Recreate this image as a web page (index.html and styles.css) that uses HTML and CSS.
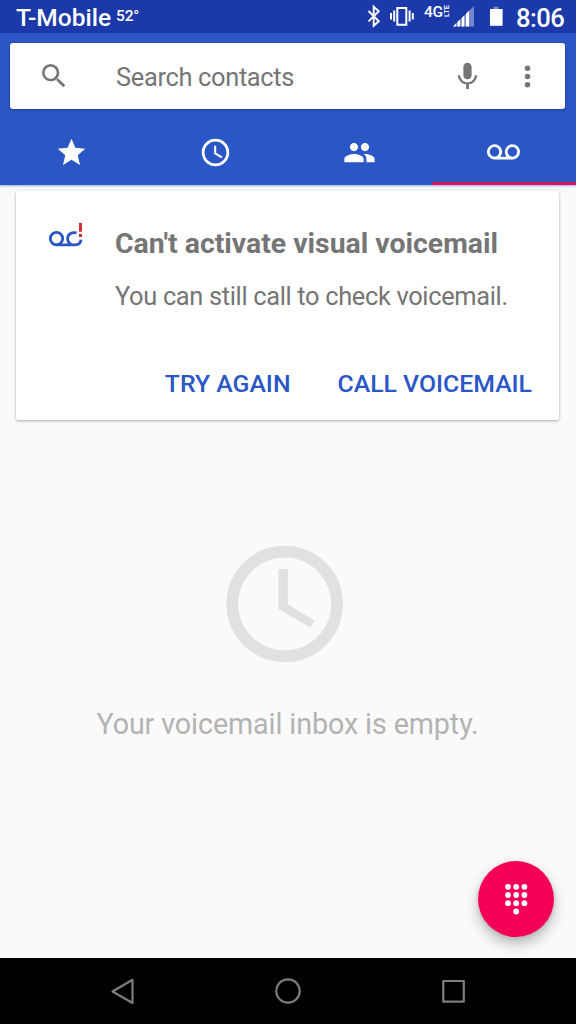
FILE: index.html
```html
<!DOCTYPE html>
<html lang="en">
<head>
<meta charset="utf-8">
<title>Phone</title>
<link rel="stylesheet" href="styles.css">
</head>
<body>
<div class="screen">
  <div class="status">
    <span class="carrier">T-Mobile</span><span class="temp">52°</span>
    <div class="status-right">
      <svg class="status-icons" width="145" height="33" viewBox="365 0 145 33">
        <path d="M368.500 11l10.300 10.200-5.100 4.600V6.700l5.100 4.500-10.300 10.200" fill="none" stroke="#fff" stroke-width="1.900"/>
        <path d="M397.300 8h9v16.700h-9zM394.200 10.500v11M391 13v6.500M409.600 10.500v11M412.800 13v6.500" fill="none" stroke="#fff" stroke-width="2"/>
        <path d="M453 26.500L474 6v20.500z" fill="#fff" opacity=".4"/>
        <path d="M453 26.500l3-3v3zM457.300 22.200l2.700-2.600v6.900h-2.700zM461.700 17.900l2.600-2.600v11.200h-2.600zM466 13.700l3-3v15.800h-3z" fill="#fff"/>
        <path d="M493.500 6.500h5V9h-5z" fill="#fff" opacity=".4"/>
        <path d="M490 9h12.600v16.800H490z" fill="#fff"/>
      </svg>
      <span class="network">4G</span><span class="lte">LTE</span>
      <span class="time">8:06</span>
    </div>
  </div>
  <header class="header">
    <div class="search">
      <svg class="icon search-icon" viewBox="0 0 24 24"><path d="M15.500 14h-.79l-.28-.27A6.471 6.471 0 0 0 16 9.500 6.500 6.500 0 1 0 9.500 16c1.610 0 3.090-.59 4.230-1.570l.27.28v.79l5 4.990L20.490 19l-4.990-5zm-6 0C7.010 14 5 11.990 5 9.500S7.010 5 9.500 5 14 7.010 14 9.500 11.990 14 9.500 14z"/></svg>
      <span class="placeholder">Search contacts</span>
      <svg class="icon mic" viewBox="0 0 24 24"><path d="M12 14c1.660 0 2.990-1.340 2.990-3L15 5c0-1.660-1.340-3-3-3S9 3.340 9 5v6c0 1.660 1.340 3 3 3zm5.300-3c0 3-2.540 5.100-5.300 5.100S6.700 14 6.700 11H5c0 3.410 2.720 6.230 6 6.720V21h2v-3.280c3.280-.48 6-3.300 6-6.720h-1.700z"/></svg>
      <svg class="icon more" viewBox="0 0 24 24"><circle cx="12" cy="6" r="2"/><circle cx="12" cy="12" r="2"/><circle cx="12" cy="18" r="2"/></svg>
    </div>
    <nav class="tabs">
      <div class="tab"><svg class="tab-icon" viewBox="0 0 24 24"><path d="M12 17.270L18.180 21l-1.640-7.030L22 9.240l-7.190-.61L12 2 9.190 8.630 2 9.240l5.460 4.730L5.820 21z"/></svg></div>
      <div class="tab"><svg class="tab-icon" viewBox="0 0 24 24"><path d="M11.990 2C6.470 2 2 6.480 2 12s4.470 10 9.990 10C17.520 22 22 17.520 22 12S17.520 2 11.990 2zM12 20c-4.420 0-8-3.580-8-8s3.580-8 8-8 8 3.580 8 8-3.580 8-8 8zM12.500 7H11v6l5.250 3.150.75-1.230-4.500-2.670z"/></svg></div>
      <div class="tab"><svg class="tab-icon" viewBox="0 0 24 24"><path d="M16 11c1.660 0 2.990-1.340 2.990-3S17.660 5 16 5s-3 1.340-3 3 1.340 3 3 3zm-8 0c1.660 0 2.990-1.340 2.990-3S9.660 5 8 5 5 6.340 5 8s1.340 3 3 3zm0 2c-2.330 0-7 1.170-7 3.500V19h14v-2.500c0-2.330-4.670-3.500-7-3.500zm8 0c-.29 0-.62.02-.97.05 1.160.84 1.970 1.970 1.970 3.450V19h6v-2.500c0-2.330-4.670-3.500-7-3.500z"/></svg></div>
      <div class="tab active"><svg class="tab-icon" viewBox="0 0 24 24"><path d="M18.500 6C15.460 6 13 8.460 13 11.500c0 1.330.47 2.550 1.260 3.500H9.740A5.500 5.500 0 1 0 5.500 17h13a5.500 5.500 0 0 0 0-11zm-13 9a3.500 3.500 0 1 1 0-7 3.500 3.500 0 0 1 0 7zm13 0a3.500 3.500 0 1 1 0-7 3.500 3.500 0 0 1 0 7z"/></svg></div>
    </nav>
  </header>
  <main class="content">
    <section class="card">
      <svg class="alert-icon" width="36" height="28" viewBox="48 221 36 28">
        <g fill="none" stroke="#2a56c6" stroke-width="2.800">
          <circle cx="56.500" cy="238.600" r="6.200"/>
          <path d="M56.500 244.800H75c3.500 0 5.700-2.200 6-5.200M76.500 232.800c-5-1-8.900 1.700-8.900 5.800 0 2.700 1.600 4.900 3.900 6"/>
        </g>
        <path d="M79 223h3v8.800h-3zM79 234h3v3h-3z" fill="#d32f2f"/>
      </svg>
      <div class="card-body">
        <h1 class="title">Can't activate visual voicemail</h1>
        <p class="detail">You can still call to check voicemail.</p>
      </div>
      <div class="actions"><span>TRY AGAIN</span><span>CALL VOICEMAIL</span></div>
    </section>
    <div class="empty">
      <svg class="clock" width="118" height="118" viewBox="226 545.500 118 118">
        <circle cx="284.700" cy="604.500" r="52.300" fill="none" stroke="#e1e1e1" stroke-width="11.800"/>
        <path d="M278.500 569.500h9.300v35.200l26.700 16.300-4.300 7-31.700-18.500z" fill="#e1e1e1"/>
      </svg>
      <p class="empty-text">Your voicemail inbox is empty.</p>
    </div>
    <div class="fab">
      <svg width="28" height="34" viewBox="502 882 28 34" fill="#fff"><circle cx="508" cy="886.800" r="2.900"/><circle cx="516.200" cy="886.800" r="2.900"/><circle cx="524.400" cy="886.800" r="2.900"/><circle cx="508" cy="895" r="2.900"/><circle cx="516.200" cy="895" r="2.900"/><circle cx="524.400" cy="895" r="2.900"/><circle cx="508" cy="903.200" r="2.900"/><circle cx="516.200" cy="903.200" r="2.900"/><circle cx="524.400" cy="903.200" r="2.900"/><circle cx="516.200" cy="911.500" r="2.900"/></svg>
    </div>
  </main>
  <footer class="navbar">
    <svg width="356" height="30" viewBox="110 976 356 30" fill="none" stroke="#7d7d7d" stroke-width="2.200" stroke-linejoin="round">
      <path d="M112.500 991.500l20-11.700v23.200z"/><circle cx="288" cy="991" r="11.700"/><path d="M443.300 981h20.500v20.700h-20.500z"/>
    </svg>
  </footer>
</div>
</body>
</html>
```
FILE: styles.css
```css
* { box-sizing: border-box; margin: 0; padding: 0; }
body { font-family: Roboto, "Liberation Sans", sans-serif; background: #fafafa; }
svg { display: block; flex: none; }
.screen { width: 576px; height: 1024px; display: flex; flex-direction: column; overflow: hidden; }
.status { height: 33px; flex: none; background: #1b39a8; color: #fff; display: flex; align-items: flex-start; padding-left: 16px; white-space: nowrap; }
.carrier { font-size: 24.500px; font-weight: 500; line-height: 35px; }
.temp { font-size: 15.500px; font-weight: 500; line-height: 33px; margin-left: 5px; letter-spacing: -.2px; }
.status-right { position: relative; margin-left: auto; width: 211px; display: flex; }
.network { position: absolute; left: 59px; top: 3px; font-size: 15.500px; line-height: 18px; font-weight: 500; letter-spacing: -.3px; }
.lte { position: absolute; left: 75px; top: 6px; width: 14px; font-size: 7.500px; font-weight: 500; line-height: 10px; text-align: center; transform: rotate(-90deg); }
.time { font-size: 25.600px; font-weight: 500; line-height: 36px; margin-left: 6px; letter-spacing: -.5px; }
.header { height: 152px; flex: none; background: #2a56c6; padding: 10px 0 0; display: flex; flex-direction: column; box-shadow: 0 1px 2px rgba(42, 86, 198, .5); z-index: 1; }
.search { height: 66px; margin: 0 11px 0 10px; background: #fff; border-radius: 3px; box-shadow: 0 1px 3px rgba(0, 0, 0, .3); display: flex; align-items: center; padding-left: 28px; }
.icon { width: 32px; height: 32px; fill: #757575; }
.placeholder { font-size: 25.400px; letter-spacing: -.32px; color: #757575; margin-left: 46px; width: 335px; line-height: 32px; padding-top: 2px; white-space: nowrap; }
.mic { width: 33px; height: 33px; }
.more { width: 33px; height: 33px; margin-left: 27px; }
.tabs { flex: 1; display: grid; grid-template-columns: repeat(4, 1fr); }
.tab { display: flex; justify-content: center; padding: 26.500px 1px 0 0; }
.tab.active { border-bottom: 3px solid #d4145e; }
.tab-icon { width: 33px; height: 33px; fill: #fff; }
.content { position: relative; height: 773px; padding: 6px 17px 0 16px; }
.card { height: 229px; background: #fff; border-radius: 2px; box-shadow: 0 1px 3px rgba(0, 0, 0, .34); display: grid; grid-template-columns: 99px 1fr; grid-template-rows: 160px 1fr; }
.alert-icon { margin: 30px 0 0 32px; }
.card-body { padding-top: 36px; color: #757575; white-space: nowrap; }
.title { font-size: 28.400px; line-height: 34px; font-weight: 700; }
.detail { font-size: 25.400px; letter-spacing: -.33px; line-height: 32px; margin-top: 19px; }
.actions { grid-column: 1 / 3; display: flex; justify-content: flex-end; gap: 47px; padding: 17px 27px 0 0; color: #2a56c6; font-size: 24.800px; font-weight: 500; line-height: 32px; white-space: nowrap; }
.empty { display: flex; flex-direction: column; align-items: center; padding-top: 125px; }
.clock { margin-right: 5px; }
.empty-text { margin-top: 43px; font-size: 28.700px; letter-spacing: -.1px; line-height: 36px; color: #b3b3b3; white-space: nowrap; }
.fab { position: absolute; left: 478px; top: 676px; width: 76px; height: 76px; border-radius: 50%; background: #f50057; box-shadow: 0 7px 14px rgba(0, 0, 0, .26), 0 1px 4px rgba(0, 0, 0, .12); display: flex; align-items: center; justify-content: center; }
.navbar { height: 66px; flex: none; background: #000; display: flex; justify-content: center; padding-top: 18px; z-index: 1; }
```
